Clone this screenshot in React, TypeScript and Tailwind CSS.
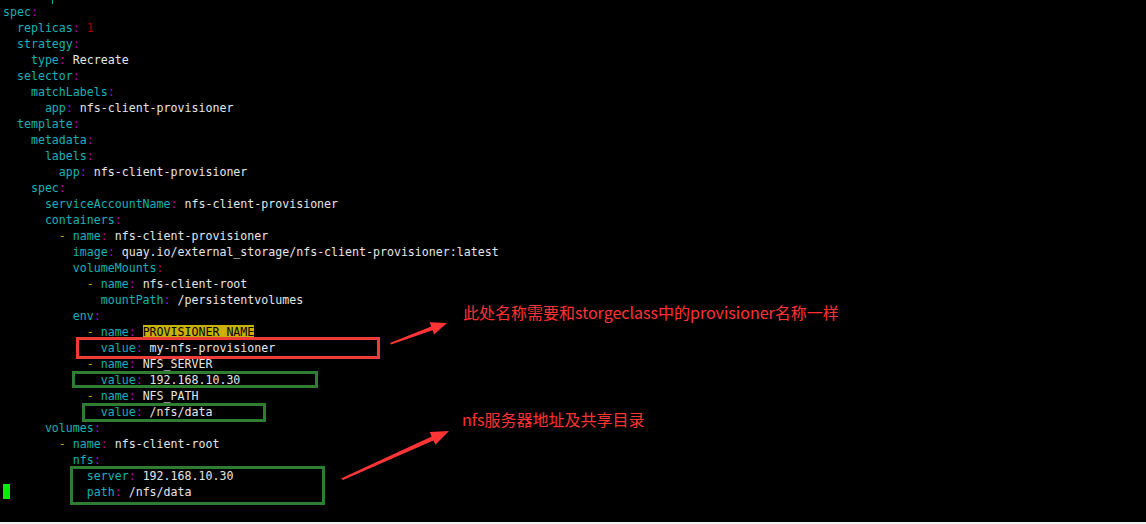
type Line = {
  indent: number;
  dash?: boolean;
  k: string;
  v?: string;
  num?: boolean;
  mark?: boolean;
  cursor?: boolean;
};

const lines: Line[] = [
  { indent: 0, k: "spec" },
  { indent: 2, k: "replicas", v: "1", num: true },
  { indent: 2, k: "strategy" },
  { indent: 4, k: "type", v: "Recreate" },
  { indent: 2, k: "selector" },
  { indent: 4, k: "matchLabels" },
  { indent: 6, k: "app", v: "nfs-client-provisioner" },
  { indent: 2, k: "template" },
  { indent: 4, k: "metadata" },
  { indent: 6, k: "labels" },
  { indent: 8, k: "app", v: "nfs-client-provisioner" },
  { indent: 4, k: "spec" },
  { indent: 6, k: "serviceAccountName", v: "nfs-client-provisioner" },
  { indent: 6, k: "containers" },
  { indent: 8, dash: true, k: "name", v: "nfs-client-provisioner" },
  { indent: 10, k: "image", v: "quay.io/external_storage/nfs-client-provisioner:latest" },
  { indent: 10, k: "volumeMounts" },
  { indent: 12, dash: true, k: "name", v: "nfs-client-root" },
  { indent: 14, k: "mountPath", v: "/persistentvolumes" },
  { indent: 10, k: "env" },
  { indent: 12, dash: true, k: "name", v: "PROVISIONER_NAME", mark: true },
  { indent: 14, k: "value", v: "my-nfs-provisioner" },
  { indent: 12, dash: true, k: "name", v: "NFS_SERVER" },
  { indent: 14, k: "value", v: "192.168.10.30" },
  { indent: 12, dash: true, k: "name", v: "NFS_PATH" },
  { indent: 14, k: "value", v: "/nfs/data" },
  { indent: 6, k: "volumes" },
  { indent: 8, dash: true, k: "name", v: "nfs-client-root" },
  { indent: 10, k: "nfs" },
  { indent: 12, k: "server", v: "192.168.10.30" },
  { indent: 12, k: "path", v: "/nfs/data", cursor: true },
];

const CodeLine = ({ l }: { l: Line }) => {
  const pad = l.dash ? l.indent : l.indent;
  return (
    <div className="h-4 leading-4 whitespace-pre">
      {l.cursor ? (
        <>
          <span className="inline-block w-[7px] h-[15px] align-top bg-[#00f000]" />
          {" ".repeat(pad - 1)}
        </>
      ) : (
        " ".repeat(pad)
      )}
      {l.dash && <span className="text-[#c8a400]">- </span>}
      <span className="text-[#16b2b6]">{l.k}</span>
      <span className="text-[#b800b8]">:</span>
      {l.v !== undefined && (
        <>
          {" "}
          {l.mark ? (
            <span className="bg-[#c9b100] text-black">{l.v}</span>
          ) : (
            <span className={l.num ? "text-[#a80000]" : "text-[#e6e6e6]"}>{l.v}</span>
          )}
        </>
      )}
    </div>
  );
};

export default function App() {
  return (
    <div className="relative w-[1146px] h-[524px] bg-black flex flex-col overflow-hidden">
      {/* descender from the line scrolled off the top */}
      <div className="absolute left-[52px] top-0 w-px h-[4px] bg-[#16b2b6]" />

      <div
        className="flex-1 pt-1 pl-[3px] text-[11.6px]"
        style={{ fontFamily: '"DejaVu Sans Mono", "Liberation Mono", monospace' }}
      >
        {lines.map((l, i) => (
          <CodeLine key={i} l={l} />
        ))}
      </div>
      <div className="h-[2px] bg-[#f0f0f0]" />

      {/* highlight boxes */}
      <div className="absolute left-[76px] top-[337px] w-[304px] h-[22px] border-[3px] border-[#f03b3b]" />
      <div className="absolute left-[72px] top-[371px] w-[246px] h-[17px] border-[3px] border-[#2f7d32]" />
      <div className="absolute left-[82px] top-[403px] w-[184px] h-[19px] border-[3px] border-[#2f7d32]" />
      <div className="absolute left-[70px] top-[466px] w-[255px] h-[39px] border-[3px] border-[#2f7d32]" />

      {/* arrows */}
      <svg className="absolute left-0 top-0" width="1146" height="524" viewBox="0 0 1146 524">
        <polygon
          fill="#ff3535"
          points="390,343 431.2,326.4 429.7,322.2 447,323 434,334.4 432.6,330.2 391,344.5"
        />
        <polygon
          fill="#ff3535"
          points="341,478.5 431.7,436.6 429.6,432 449,431 435.4,444.8 433.5,440.5 343,480"
        />
      </svg>

      {/* notes */}
      <div
        className="absolute left-[463px] top-[302px] text-[16px] leading-5 text-[#ff3333] whitespace-nowrap"
        style={{ fontFamily: '"Noto Sans CJK SC", "Noto Sans", sans-serif' }}
      >
        此处名称需要和storgeclass中的provisioner名称一样
      </div>
      <div
        className="absolute left-[462px] top-[409px] text-[16px] leading-5 text-[#ff3333] whitespace-nowrap"
        style={{ fontFamily: '"Noto Sans CJK SC", "Noto Sans", sans-serif' }}
      >
        nfs服务器地址及共享目录
      </div>
    </div>
  );
}
